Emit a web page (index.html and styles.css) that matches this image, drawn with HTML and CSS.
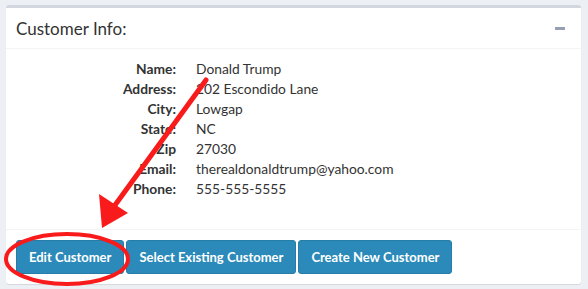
FILE: index.html
```html
<!DOCTYPE html>
<html lang="en">
<head>
  <meta charset="UTF-8">
  <title>Customer Info</title>
  <meta name="viewport" content="width=device-width, initial-scale=1">
  <link rel="stylesheet" href="styles.css">
</head>
<body>
  <div class="box">
    <div class="box-header">
      <h3 class="box-title">Customer Info:</h3>
      <span class="collapse-btn"></span>
    </div>
    <div class="box-body">
      <dl class="info">
        <dt>Name:</dt><dd>Donald Trump</dd>
        <dt>Address:</dt><dd>202 Escondido Lane</dd>
        <dt>City:</dt><dd>Lowgap</dd>
        <dt>State:</dt><dd>NC</dd>
        <dt>Zip</dt><dd>27030</dd>
        <dt>Email:</dt><dd>therealdonaldtrump@yahoo.com</dd>
        <dt>Phone:</dt><dd>555-555-5555</dd>
      </dl>
    </div>
    <div class="box-footer">
      <button class="btn">Edit Customer</button>
      <button class="btn">Select Existing Customer</button>
      <button class="btn">Create New Customer</button>
    </div>
  </div>

  <!-- annotation drawn over the screenshot -->
  <svg class="markup" width="588" height="289" viewBox="0 0 588 289">
    <line x1="206" y1="80" x2="110" y2="212" stroke="#f91b1b" stroke-width="5" stroke-linecap="round"/>
    <polygon points="102,228 99,194 128,213" fill="#f91b1b"/>
    <ellipse cx="67" cy="259" rx="61" ry="25" fill="none" stroke="#f91b1b" stroke-width="4"/>
  </svg>
</body>
</html>
```
FILE: styles.css
```css
body {
  margin: 0;
  padding: 5px 7px 5px 6px;
  background: #ecf0f5;
  font-family: Lato, "Liberation Sans", sans-serif;
  color: #333;
  position: relative;
}

/*===============================
Box
=============*/

.box {
  background: #fff;
  border-top: 3px solid #d2d6de;
  border-radius: 3px;
  box-shadow: 0 1px 1px rgba(0, 0, 0, 0.1);
}

.box-header {
  height: 40px;
  padding: 0 10px;
  display: flex;
  align-items: center;
  justify-content: space-between;
  border-bottom: 1px solid #f4f4f4;
}

.box-title {
  margin: 0;
  font-size: 17px;
  font-weight: normal;
  color: #333;
}

.collapse-btn {
  width: 10px;
  height: 3px;
  background: #97a0b3;
  margin-right: 6px;
}

.box-body {
  padding: 10px 10px 0;
}

.info {
  margin: 0 0 30px;
  display: grid;
  grid-template-columns: 160px 1fr;
  column-gap: 20px;
  font-size: 13.8px;
  line-height: 20px;
}

.info dt {
  text-align: right;
  font-weight: bold;
}

.info dd {
  margin: 0;
}

.box-footer {
  border-top: 1px solid #f4f4f4;
  padding: 10px;
  display: flex;
  gap: 2px;
}

.btn {
  font-family: Lato, "Liberation Sans", sans-serif;
  font-size: 13px;
  font-weight: bold;
  height: 34px;
  padding: 0 12px;
  color: #fff;
  background: #2b8ab9;
  border: 1px solid #277ca8;
  border-radius: 3px;
}

.markup {
  position: absolute;
  top: 0;
  left: 0;
  pointer-events: none;
}
```
